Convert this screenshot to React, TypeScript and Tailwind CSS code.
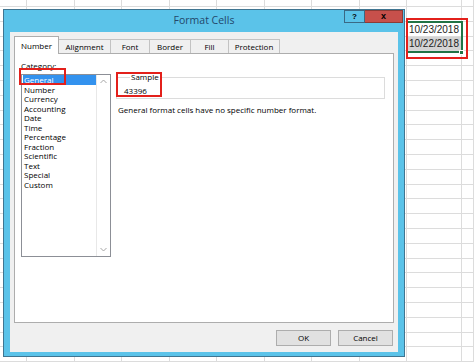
import React from "react";

const categories = [
  "General",
  "Number",
  "Currency",
  "Accounting",
  "Date",
  "Time",
  "Percentage",
  "Fraction",
  "Scientific",
  "Text",
  "Special",
  "Custom",
];

const tabs = [
  { label: "Number", w: "w-[45px]", active: true },
  { label: "Alignment", w: "w-[52px]", active: false },
  { label: "Font", w: "w-[39px]", active: false },
  { label: "Border", w: "w-[41px]", active: false },
  { label: "Fill", w: "w-[38px]", active: false },
  { label: "Protection", w: "w-[51px]", active: false },
];

const ROWS = 25;
const COLS = 11;

function Chevron({ up }: { up: boolean }) {
  return (
    <svg width="7" height="5" viewBox="0 0 7 5">
      <polyline
        points={up ? "0.5,4 3.5,1 6.5,4" : "0.5,1 3.5,4 6.5,1"}
        fill="none"
        stroke="#a6a6a6"
        strokeWidth="1"
      />
    </svg>
  );
}

export default function App() {
  const cells: React.ReactNode[] = [];
  for (let r = 0; r < ROWS; r++) {
    for (let c = 0; c < COLS; c++) {
      let content: React.ReactNode = null;
      let extra = "bg-white";
      if (c === 9 && r === 2) {
        content = "10/23/2018";
      }
      if (c === 9 && r === 3) {
        content = "10/22/2018";
        extra = "bg-[#d4d4d4]";
      }
      cells.push(
        <div
          key={`${r}-${c}`}
          className={`border-r border-b border-[#dcdcdc] flex items-end justify-end pr-[2px] text-[10px] leading-[13px] text-[#222] font-['Liberation_Sans',sans-serif] ${extra}`}
        >
          {content}
        </div>
      );
    }
  }

  return (
    <div className="relative w-[474px] h-[362px] overflow-hidden bg-white font-['Open_Sans',sans-serif]">
      {/* spreadsheet grid */}
      <div className="grid grid-cols-[27px_repeat(8,47.5px)_55px_1fr] grid-rows-[7px_repeat(24,14.8px)] w-[474px]">
        {cells}
      </div>

      {/* selection border */}
      <div className="absolute left-[406px] top-[21px] w-[57px] h-[32px] border-2 border-[#217346]" />
      <div className="absolute left-[459px] top-[50px] w-[5px] h-[5px] bg-[#217346] border border-white" />

      {/* dialog */}
      <div className="absolute left-[3px] top-[9px] w-[402px] h-[348px] border border-[#3f7591] bg-[#5bc3e9] flex flex-col">
        <div className="relative h-[22px] flex items-center justify-center">
          <span className="text-[10.5px] text-[#23476b]">Format Cells</span>
          <div className="absolute top-0 right-[1px] flex">
            <div className="w-[21px] h-[13px] border border-[#3a6985] bg-[#5bc3e9] flex items-center justify-center text-[8px] font-bold text-black font-['Liberation_Sans',sans-serif]">
              ?
            </div>
            <div className="w-[38px] h-[13px] border border-[#8c3b36] border-l-0 bg-[#c7504b] flex items-center justify-center text-[9px] font-bold text-black font-['Liberation_Sans',sans-serif] leading-none">
              x
            </div>
          </div>
        </div>

        <div className="mx-[6px] mb-[4px] flex-1 bg-[#f0f0f0] flex flex-col pl-[4px] pr-[4px] pt-[4px]">
          {/* tabs */}
          <div className="h-[17px] flex items-end">
            {tabs.map((t) =>
              t.active ? (
                <div
                  key={t.label}
                  className={`${t.w} h-[18px] -mb-px relative z-10 bg-white border border-b-0 border-[#adadad] flex items-center justify-center text-[8px] text-black pt-[1px]`}
                >
                  {t.label}
                </div>
              ) : (
                <div
                  key={t.label}
                  className={`${t.w} h-[14px] bg-[#f0f0f0] border border-l-0 border-b-0 border-[#c3c3c3] flex items-center justify-center text-[8px] text-black`}
                >
                  {t.label}
                </div>
              )
            )}
          </div>

          {/* panel */}
          <div className="flex-1 bg-white border border-[#adadad] flex pl-[6px] pt-[4px]">
            <div className="flex flex-col">
              <div className="h-[16px] leading-[16px] text-[8px] text-black">Category:</div>
              <div className="w-[90px] h-[183px] border border-[#8c8f96] bg-white flex">
                <div className="flex-1 flex flex-col">
                  {categories.map((c, i) => (
                    <div
                      key={c}
                      className={`h-[9.5px] leading-[9.5px] text-[8px] ml-[1px] pl-[1px] ${
                        i === 0 ? "bg-[#3392ee] text-white" : "text-black"
                      }`}
                    >
                      {c}
                    </div>
                  ))}
                </div>
                <div className="w-[14px] border-l border-[#e8e8e8] flex flex-col justify-between items-center py-[4px]">
                  <Chevron up={true} />
                  <Chevron up={false} />
                </div>
              </div>
            </div>

            <div className="ml-[5px] w-[269px] flex flex-col">
              <fieldset className="mt-[14px] h-[27px] border border-[#dcdcdc] pl-[7px]">
                <legend className="ml-[6px] px-[1px] text-[8px] leading-[10px] text-black">Sample</legend>
                <div className="mt-[4px] text-[8px] leading-[10px] text-black">43396</div>
              </fieldset>
              <div className="mt-[6px] ml-[2px] text-[8px] leading-[10px] text-black">
                General format cells have no specific number format.
              </div>
            </div>
          </div>

          {/* buttons */}
          <div className="h-[29px] flex justify-end items-start pt-[7px] pr-[1px] gap-[7px]">
            <div className="w-[55px] h-[16px] bg-[#e1e1e1] border border-[#adadad] flex items-center justify-center text-[8px] text-black">
              OK
            </div>
            <div className="w-[55px] h-[16px] bg-[#e1e1e1] border border-[#adadad] flex items-center justify-center text-[8px] text-black">
              Cancel
            </div>
          </div>
        </div>
      </div>

      {/* red annotation boxes */}
      <div className="absolute left-[19px] top-[68px] w-[47px] h-[17px] border-2 border-[#e3201b]" />
      <div className="absolute left-[116px] top-[72px] w-[46px] h-[25px] border-2 border-[#e3201b]" />
      <div className="absolute left-[406px] top-[18px] w-[62px] h-[41px] border-2 border-[#e3201b]" />
    </div>
  );
}
